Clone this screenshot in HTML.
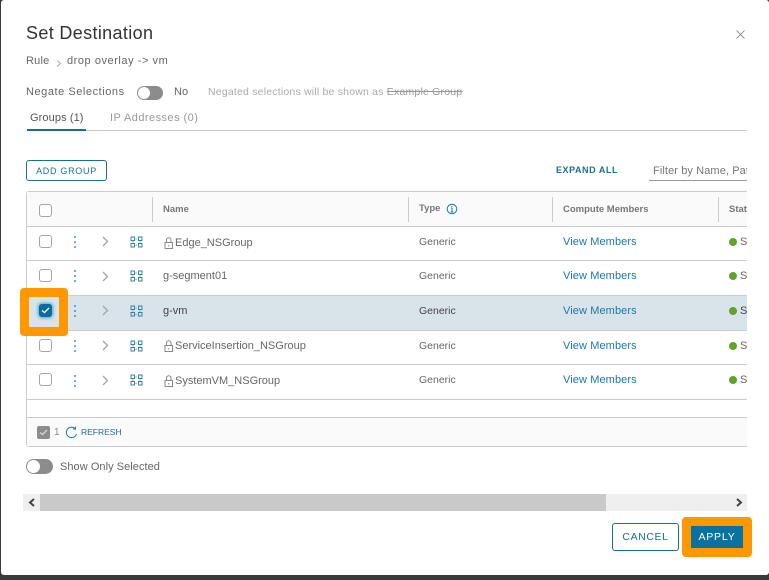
<!DOCTYPE html>
<html><head><meta charset="utf-8"><style>
html,body{margin:0;padding:0;width:769px;height:580px;overflow:hidden;background:#3a3a3a}
*{box-sizing:border-box}
body{font-family:"Liberation Sans",sans-serif;position:relative}
.a{position:absolute;white-space:nowrap}
.t{color:#666;font-size:11px;line-height:14px}
.l{position:absolute;left:26px;width:721px;height:1px;background:#ccc}
.cb{position:absolute;left:39px;width:13px;height:13px;border:1px solid #a5a5a5;border-radius:3px;background:#fff}
.v{position:absolute;top:0;width:1px;height:25px;background:#ccc}
.h{font-size:9.5px;font-weight:bold;color:#777;line-height:12px}
.m{color:#1a78a8;font-size:11px;line-height:14px}
.d{position:absolute;left:729px;width:8px;height:8px;border-radius:50%;background:#60a32a}
svg{position:absolute;overflow:visible}
</style></head><body>
<div class="a" id="dlg" style="left:1px;top:0;width:768px;height:575px;background:#fff;border-radius:3px"></div>

<div class="a" style="left:26px;top:21px;font-size:18px;line-height:24px;color:#333;letter-spacing:.35px">Set Destination</div>
<svg style="left:736px;top:30px" width="9" height="9" fill="none" stroke="#777" stroke-width=".8"><path d="M0.5 .5L8.500 8.500M8.500 .5L.5 8.500"/></svg>
<div class="a t" style="left:26px;top:54px;letter-spacing:.2px">Rule</div>
<svg style="left:56px;top:60px" width="6" height="7" fill="none" stroke="#aaa"><path d="M1 .5l3.500 3-3.500 3"/></svg>
<div class="a t" style="left:67px;top:54px;letter-spacing:.55px">drop overlay -&gt; vm</div>
<div class="a t" style="left:26px;top:85px;letter-spacing:.55px">Negate Selections</div>
<div class="a" style="left:137px;top:86px;width:26px;height:14px;border-radius:7px;background:#8c8c8c;border:1px solid #8c8c8c"><div style="width:12px;height:12px;border-radius:50%;background:#fff"></div></div>
<div class="a t" style="left:174px;top:85px">No</div>
<div class="a t" style="left:208px;top:85px;color:#aaa;font-size:10.5px;letter-spacing:.2px">Negated selections will be shown as <span style="text-decoration:line-through;color:#999">Example Group</span></div>
<div class="a t" style="left:30px;top:111px;color:#555;letter-spacing:.1px">Groups (1)</div>
<div class="a t" style="left:110px;top:111px;color:#999;letter-spacing:.45px">IP Addresses (0)</div>
<div class="a" style="left:27px;top:130px;width:720px;height:1px;background:#ccc"></div>
<div class="a" style="left:27px;top:129px;width:59px;height:2px;background:#1a6b8c"></div>

<div class="a" style="left:26px;top:160px;width:81px;height:21px;border:1px solid #1a6f91;border-radius:3px;text-align:center;font-size:9px;line-height:20px;letter-spacing:.7px;color:#1a6f91">ADD GROUP</div>
<div class="a" style="left:556px;top:164px;font-size:9px;font-weight:bold;line-height:13px;letter-spacing:.55px;color:#1a6f91">EXPAND ALL</div>
<div class="a" style="left:649px;top:160px;width:98px;height:21px;border-bottom:1px solid #999;overflow:hidden;font-size:11px;line-height:22px;color:#777;padding-left:4px;letter-spacing:.1px">Filter by Name, Path and more</div>

<div class="a" style="left:26px;top:191px;width:721px;height:256px;border:1px solid #ccc;border-right:0;border-radius:3px 0 0 3px;background:#fff"></div>
<div class="a" style="left:27px;top:192px;width:720px;height:34px;background:#fafafa"></div>
<div class="a" style="left:27px;top:418px;width:720px;height:28px;background:#fafafa"></div>
<div class="a" style="left:27px;top:296px;width:720px;height:34px;background:#d9e4ea"></div>
<div class="l" style="top:226px"></div>
<div class="l" style="top:260px"></div>
<div class="l" style="top:295px"></div>
<div class="l" style="top:330px"></div>
<div class="l" style="top:364px"></div>
<div class="l" style="top:399px"></div>
<div class="l" style="top:417px"></div>

<div style="position:absolute;left:0;top:197px;width:747px;height:25px">
<div class="v" style="left:152px"></div><div class="v" style="left:408px"></div><div class="v" style="left:552px"></div><div class="v" style="left:718px"></div>
</div>
<div class="cb" style="top:204px"></div>
<div class="a h" style="left:163px;top:204px">Name</div>
<div class="a h" style="left:419px;top:203px">Type</div>
<svg style="left:446px;top:203px" width="12" height="12" fill="none" stroke="#1a7cb0"><circle cx="6" cy="6" r="4.800"/><path d="M6 5v4M4.600 9h2.800M5 5h1M6 3v1"/></svg>
<div class="a h" style="left:563px;top:204px">Compute Members</div>
<div class="a h" style="left:729px;width:18px;overflow:hidden;top:204px">Status</div>

<!-- row 1 -->
<div class="cb" style="top:235px"></div>
<svg style="left:73px;top:235px" width="4" height="14" fill="#4a8fb0"><circle cx="2" cy="2" r="1"/><circle cx="2" cy="7" r="1"/><circle cx="2" cy="12" r="1"/></svg>
<svg style="left:102px;top:236px" width="7" height="11" fill="none" stroke="#a5a5a5" stroke-width="1.300"><path d="M1 1l4.500 4.500L1 10"/></svg>
<svg style="left:130px;top:236px" width="13" height="12" fill="none" stroke="#2f7f9c" stroke-width=".9"><path d="M1 1h3.500v3.500H1zM8.500 1H12v3.500H8.500zM1 7.500h3.500V11H1zM8.500 7.500H12V11H8.500z"/><path stroke-dasharray="1 1" d="M5.500 3h2M5.500 9.500h2M3 5.500v1M10 5.500v1"/></svg>
<svg style="left:164px;top:237px" width="9" height="12" fill="none" stroke="#888"><path d="M1 5.500h7.500v6H1zM2.500 5.500V3a2.200 2.200 0 0 1 4.500 0v2.500M4.700 8v1.500"/></svg>
<div class="a t" style="left:175px;top:236px">Edge_NSGroup</div>
<div class="a t" style="left:419px;top:235px;font-size:10.500px">Generic</div>
<div class="a m" style="left:563px;top:235px;letter-spacing:.1px">View Members</div>
<div class="d" style="top:238px"></div><div class="a t" style="left:740px;top:235px">S</div>

<!-- row 2 -->
<div class="cb" style="top:269px"></div>
<svg style="left:73px;top:269px" width="4" height="14" fill="#4a8fb0"><circle cx="2" cy="2" r="1"/><circle cx="2" cy="7" r="1"/><circle cx="2" cy="12" r="1"/></svg>
<svg style="left:102px;top:271px" width="7" height="11" fill="none" stroke="#a5a5a5" stroke-width="1.300"><path d="M1 1l4.500 4.500L1 10"/></svg>
<svg style="left:130px;top:270px" width="13" height="12" fill="none" stroke="#2f7f9c" stroke-width=".9"><path d="M1 1h3.500v3.500H1zM8.500 1H12v3.500H8.500zM1 7.500h3.500V11H1zM8.500 7.500H12V11H8.500z"/><path stroke-dasharray="1 1" d="M5.500 3h2M5.500 9.500h2M3 5.500v1M10 5.500v1"/></svg>
<div class="a t" style="left:163px;top:269px">g-segment01</div>
<div class="a t" style="left:419px;top:269px;font-size:10.500px">Generic</div>
<div class="a m" style="left:563px;top:269px;letter-spacing:.1px">View Members</div>
<div class="d" style="top:272px"></div><div class="a t" style="left:740px;top:269px">S</div>

<!-- row 3 -->
<svg style="left:73px;top:304px" width="4" height="14" fill="#4a8fb0"><circle cx="2" cy="2" r="1"/><circle cx="2" cy="7" r="1"/><circle cx="2" cy="12" r="1"/></svg>
<svg style="left:102px;top:305px" width="7" height="11" fill="none" stroke="#a5a5a5" stroke-width="1.300"><path d="M1 1l4.500 4.500L1 10"/></svg>
<svg style="left:130px;top:305px" width="13" height="12" fill="none" stroke="#2f7f9c" stroke-width=".9"><path d="M1 1h3.500v3.500H1zM8.500 1H12v3.500H8.500zM1 7.500h3.500V11H1zM8.500 7.500H12V11H8.500z"/><path stroke-dasharray="1 1" d="M5.500 3h2M5.500 9.500h2M3 5.500v1M10 5.500v1"/></svg>
<div class="a t" style="left:163px;top:304px;color:#444">g-vm</div>
<div class="a t" style="left:419px;top:304px;font-size:10.500px;color:#444">Generic</div>
<div class="a m" style="left:563px;top:304px;letter-spacing:.1px">View Members</div>
<div class="d" style="top:307px"></div><div class="a t" style="left:740px;top:304px;color:#444">S</div>

<!-- row 4 -->
<div class="cb" style="top:339px"></div>
<svg style="left:73px;top:339px" width="4" height="14" fill="#4a8fb0"><circle cx="2" cy="2" r="1"/><circle cx="2" cy="7" r="1"/><circle cx="2" cy="12" r="1"/></svg>
<svg style="left:102px;top:340px" width="7" height="11" fill="none" stroke="#a5a5a5" stroke-width="1.300"><path d="M1 1l4.500 4.500L1 10"/></svg>
<svg style="left:130px;top:340px" width="13" height="12" fill="none" stroke="#2f7f9c" stroke-width=".9"><path d="M1 1h3.500v3.500H1zM8.500 1H12v3.500H8.500zM1 7.500h3.500V11H1zM8.500 7.500H12V11H8.500z"/><path stroke-dasharray="1 1" d="M5.500 3h2M5.500 9.500h2M3 5.500v1M10 5.500v1"/></svg>
<svg style="left:164px;top:340px" width="9" height="12" fill="none" stroke="#888"><path d="M1 5.500h7.500v6H1zM2.500 5.500V3a2.200 2.200 0 0 1 4.500 0v2.500M4.700 8v1.500"/></svg>
<div class="a t" style="left:175px;top:339px">ServiceInsertion_NSGroup</div>
<div class="a t" style="left:419px;top:339px;font-size:10.500px">Generic</div>
<div class="a m" style="left:563px;top:339px;letter-spacing:.1px">View Members</div>
<div class="d" style="top:342px"></div><div class="a t" style="left:740px;top:339px">S</div>

<!-- row 5 -->
<div class="cb" style="top:373px"></div>
<svg style="left:73px;top:374px" width="4" height="14" fill="#4a8fb0"><circle cx="2" cy="2" r="1"/><circle cx="2" cy="7" r="1"/><circle cx="2" cy="12" r="1"/></svg>
<svg style="left:102px;top:375px" width="7" height="11" fill="none" stroke="#a5a5a5" stroke-width="1.300"><path d="M1 1l4.500 4.500L1 10"/></svg>
<svg style="left:130px;top:374px" width="13" height="12" fill="none" stroke="#2f7f9c" stroke-width=".9"><path d="M1 1h3.500v3.500H1zM8.500 1H12v3.500H8.500zM1 7.500h3.500V11H1zM8.500 7.500H12V11H8.500z"/><path stroke-dasharray="1 1" d="M5.500 3h2M5.500 9.500h2M3 5.500v1M10 5.500v1"/></svg>
<svg style="left:164px;top:375px" width="9" height="12" fill="none" stroke="#888"><path d="M1 5.500h7.500v6H1zM2.500 5.500V3a2.200 2.200 0 0 1 4.500 0v2.500M4.700 8v1.500"/></svg>
<div class="a t" style="left:175px;top:374px">SystemVM_NSGroup</div>
<div class="a t" style="left:419px;top:373px;font-size:10.500px">Generic</div>
<div class="a m" style="left:563px;top:373px;letter-spacing:.1px">View Members</div>
<div class="d" style="top:376px"></div><div class="a t" style="left:740px;top:373px">S</div>

<!-- orange checkbox highlight -->
<div class="a" style="left:20px;top:288px;width:48px;height:48px;background:#ff9800;border-radius:4px"></div>
<div class="a" style="left:29px;top:297px;width:30px;height:30px;background:#d9e4ea"></div>
<div class="a" style="left:39px;top:304px;width:13px;height:13px;border-radius:3px;background:#0a6b9c;box-shadow:0 0 3px 1px #4aa3d0"></div>
<svg style="left:41px;top:307px" width="9" height="7" fill="none" stroke="#fff" stroke-width="1.300"><path d="M1 3.500l2.500 2L8 1"/></svg>

<!-- footer -->
<div class="a" style="left:37px;top:426px;width:13px;height:13px;background:#8c8c8c;border-radius:2px"></div>
<svg style="left:39px;top:429px" width="9" height="7" fill="none" stroke="#d5d5d5" stroke-width="1.300"><path d="M1 3.500l2.500 2L8 1"/></svg>
<div class="a t" style="left:54px;top:426px;font-size:10px;color:#888">1</div>
<svg style="left:65px;top:426px" width="13" height="13" fill="none" stroke="#1a7a9e"><path d="M11.500 8a5.200 5.200 0 1 1-1.500-5.500M10.500 .5v2.500H8"/></svg>
<div class="a" style="left:81px;top:426px;font-size:8.500px;line-height:12px;color:#1a6f91">REFRESH</div>

<div class="a" style="left:26px;top:459px;width:27px;height:15px;border-radius:8px;background:#8c8c8c;padding:1px"><div style="width:13px;height:13px;border-radius:50%;background:#fff"></div></div>
<div class="a t" style="left:60px;top:460px;letter-spacing:.05px">Show Only Selected</div>

<!-- scrollbar -->
<div class="a" style="left:23px;top:494px;width:724px;height:17px;background:#efefef"></div>
<div class="a" style="left:40px;top:494px;width:566px;height:17px;background:#c9c9c9"></div>
<svg style="left:28px;top:498px" width="7" height="9" fill="none" stroke="#444" stroke-width="2"><path d="M6 1L2 4.500l4 3.500"/></svg>
<svg style="left:736px;top:498px" width="7" height="9" fill="none" stroke="#444" stroke-width="2"><path d="M1 1l4 3.500L1 8"/></svg>

<!-- buttons -->
<div class="a" style="left:612px;top:523px;width:67px;height:28px;border:1px solid #1a6f91;border-radius:3px;text-align:center;font-size:10.500px;line-height:26px;letter-spacing:.6px;color:#1a6f91">CANCEL</div>
<div class="a" style="left:682px;top:517px;width:70px;height:40px;background:#ff9800;border-radius:4px"></div>
<div class="a" style="left:691px;top:526px;width:52px;height:22px;background:#0a72a3;text-align:center;font-size:10.500px;line-height:22px;letter-spacing:.8px;color:#fff">APPLY</div>
</body></html>
